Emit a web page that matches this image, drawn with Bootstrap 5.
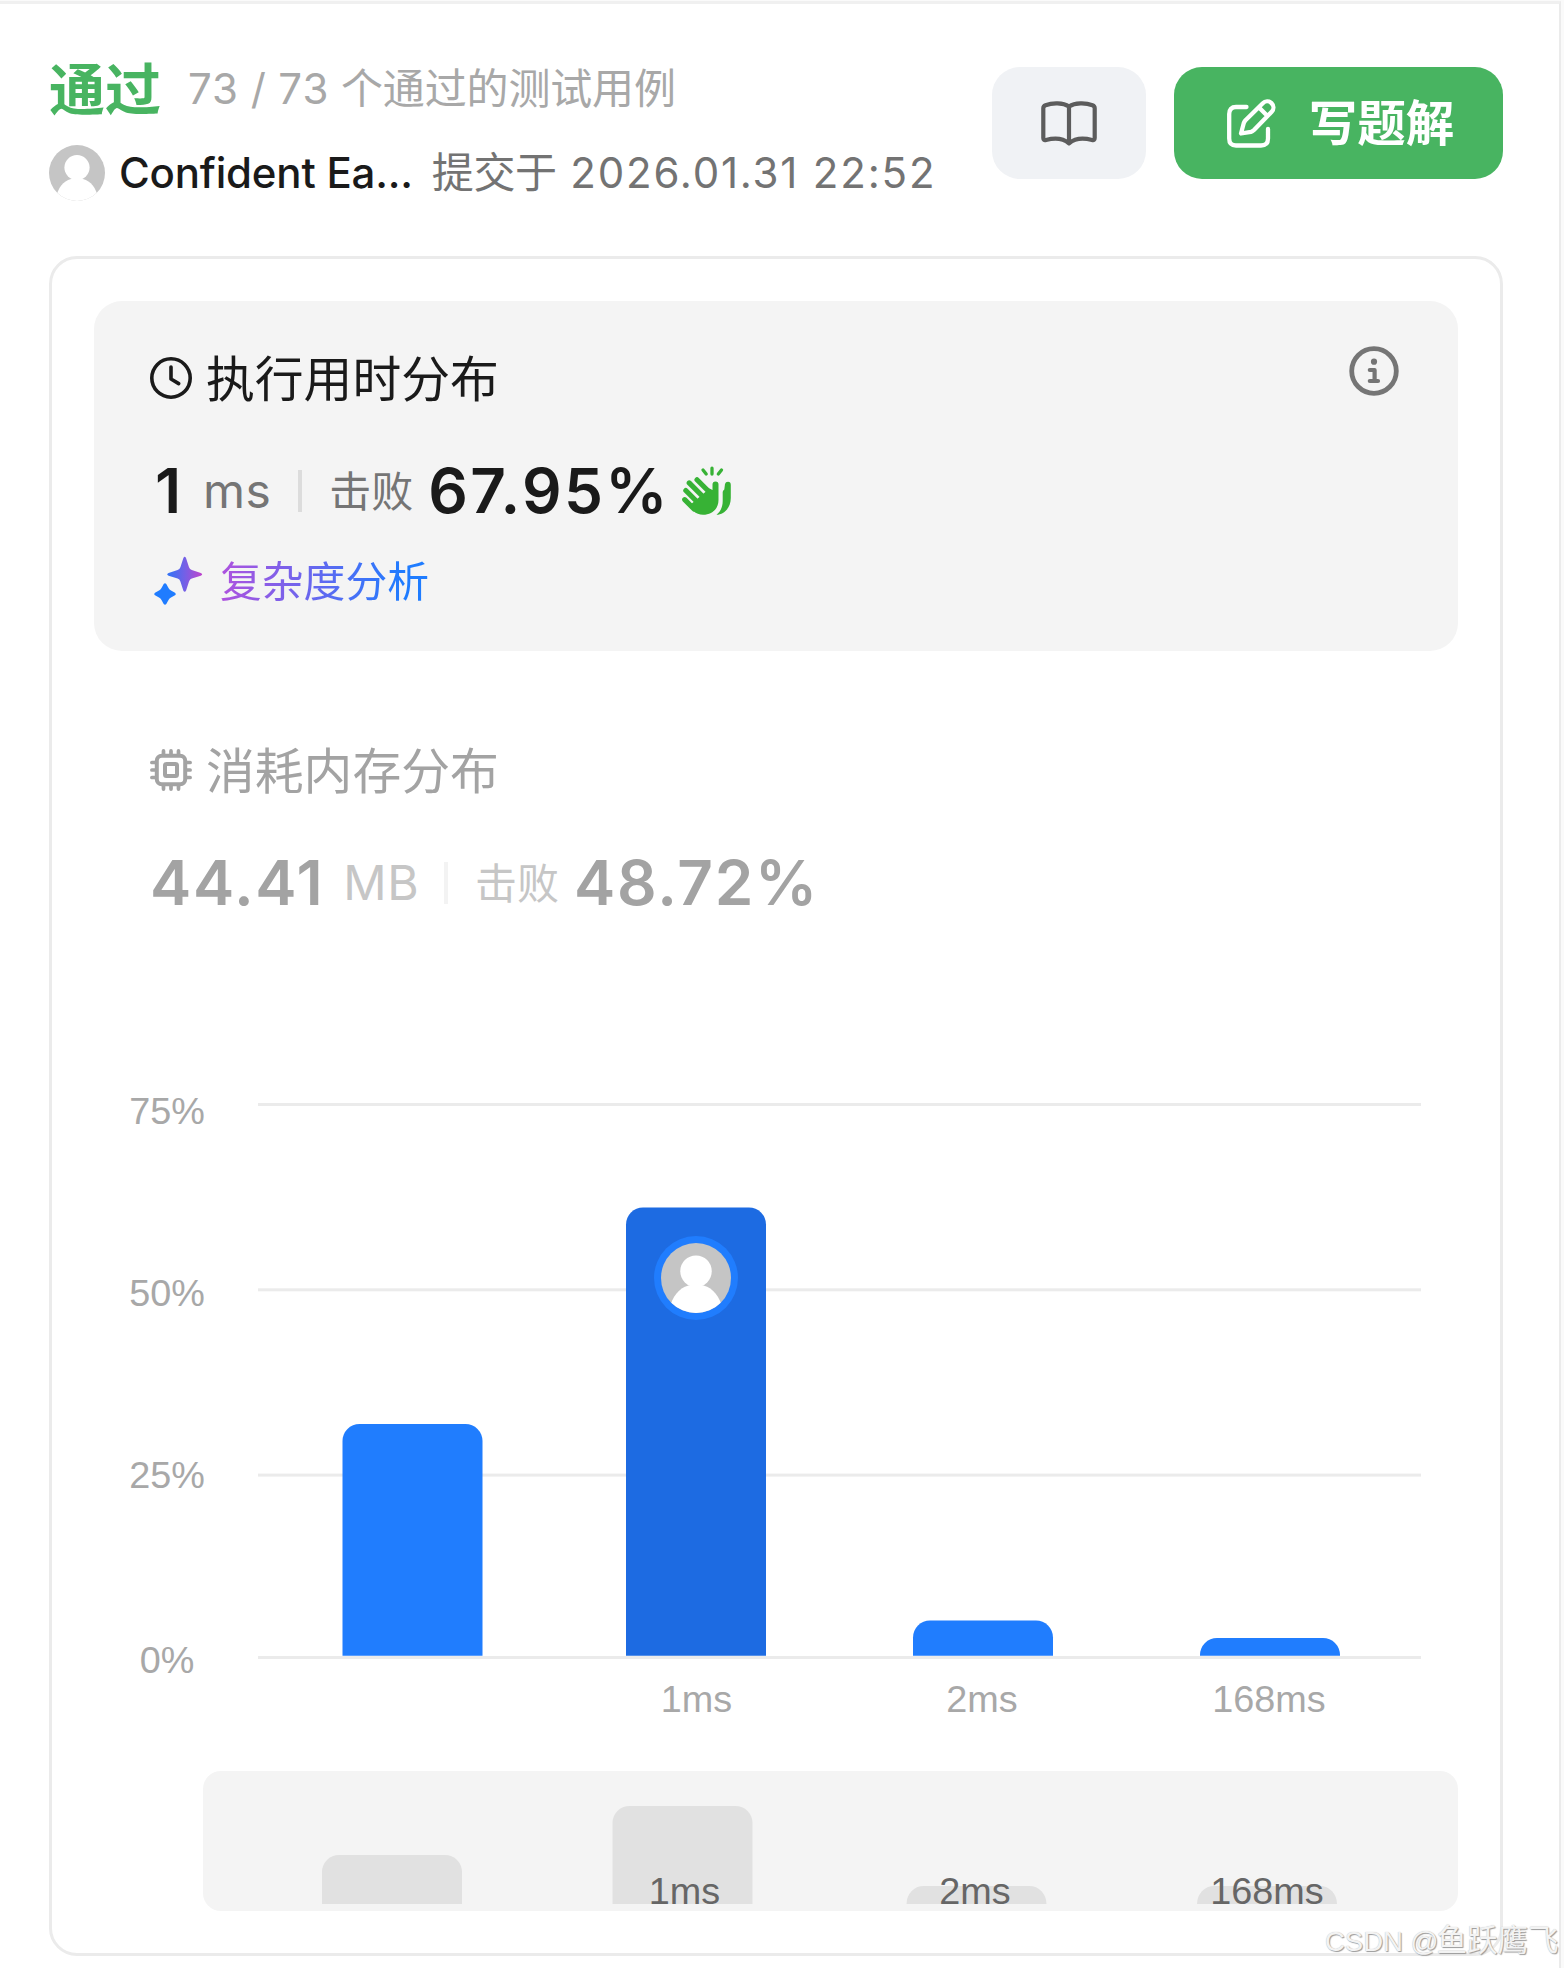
<!DOCTYPE html>
<html lang="zh-CN">
<head>
<meta charset="utf-8">
<title>提交结果</title>
<link href="https://cdn.jsdelivr.net/npm/bootstrap@5.3.0/dist/css/bootstrap.min.css" rel="stylesheet">
<style>
body{background:#fafafa;font-family:Inter,"Noto Sans CJK SC",sans-serif;color:#1a1a1a;padding-top:1px;height:1968px;overflow:hidden}
.pane{width:1561px;height:1967px;background:#fff;border-top:3px solid #f0f0f0;border-right:2px solid #ebebeb;padding:43px 56px 0 49px}
svg{display:block;flex:none}
.line84{height:84px;line-height:84px;font-size:42px;white-space:nowrap}
.verdict{font-size:56px;font-weight:700;color:#48b461;margin:1px 27px 0 0}
.cases{color:#a8a8a8;letter-spacing:1px;word-spacing:-1.2px}
.cases .cjk{letter-spacing:-.15px}
.user{font-weight:500;margin-left:14px;letter-spacing:-.2px}
.when{color:#737373;margin-left:19px;letter-spacing:1.8px}
.when .cjk{letter-spacing:-.4px}
.actions{gap:28px;margin-top:20px}
.act{height:112px;border-radius:28px;border:0}
.act-book{width:154px;background:#f0f2f5}
.act-write{width:329px;background:#48b461;color:#fff;font-size:48.5px;font-weight:700;line-height:1}
.act-write:hover{background:#48b461;color:#fff}
.act-write .label{margin:3px 0 0 33px}
.result{border:3px solid #ebebeb;border-radius:28px;padding:42px;margin-top:41px;height:1700px;background:#fff}
.metric{height:350px;border-radius:28px;padding:47px 56px 0}
.metric-on{background:#f4f4f4}
.metric-off{margin-top:42px}
.metric-title{height:60px;line-height:60px;font-size:48.8px;font-weight:400}
.metric-title .label{margin:3px 0 0 14px}
.metric-value{height:70px;line-height:70px;margin-top:48px;white-space:nowrap}
.num{font-size:62px;font-weight:600;letter-spacing:1.7px}
.unit{font-size:48px;color:#757575;letter-spacing:.5px}
.beat{font-size:42px;color:#757575;margin:2px 0 0 27px}
.bar-sep{width:4px;height:42px;background:#dcdcdc}
.metric-off{color:#a3a3a3}
.metric-off .unit,.metric-off .beat{color:#c6c6c6}
.metric-off .bar-sep{background:#f3f3f3}
.analysis{height:50px;line-height:50px;margin-top:30px;font-size:41.8px}
.analysis .label{margin:1px 0 0 17px;background:linear-gradient(90deg,#af52de,#1f7cff 88%);-webkit-background-clip:text;background-clip:text;color:transparent}
.axis{font-family:"Liberation Sans",sans-serif;font-size:37.8px}
.navi{width:1255px;height:140px;border-radius:18px;background:#f4f4f4;overflow:hidden}
.stamp{position:absolute;left:1325px;top:1920px;font:27.500px/40px "Liberation Sans","Noto Sans CJK SC",sans-serif;color:#f3f3f3;text-shadow:1px 1px 1px #999,0 0 1px #bbb;white-space:nowrap}
.stamp .cjk{font-size:30.5px;margin-left:-2px}
</style>
</head>
<body class="position-relative">
<svg width="0" height="0" class="position-absolute">
  <defs>
    <clipPath id="round"><circle cx="28" cy="28" r="28"/></clipPath>
    <symbol id="avatar" viewBox="0 0 56 56">
      <g clip-path="url(#round)"><rect width="56" height="56" fill="#c5c5c5"/><circle cx="28" cy="22.6" r="12.6" fill="#fff"/><path d="M22 34H34C42 36 47 43.500 49 52V57H7V52C9 43.500 14 36 22 34Z" fill="#fff"/></g>
    </symbol>
    <linearGradient id="spark" x1="0" y1="0" x2="1" y2="0"><stop offset="0" stop-color="#2f73f6"/><stop offset=".5" stop-color="#7460e6"/><stop offset="1" stop-color="#c044cc"/></linearGradient>
  </defs>
</svg>
<main class="pane">
  <header class="d-flex justify-content-between align-items-start">
    <div>
      <div class="line84 d-flex"><span class="verdict">通过</span><span class="cases">73 / 73 <span class="cjk">个通过的测试用例</span></span></div>
      <div class="line84 d-flex align-items-center"><svg width="56" height="56"><use href="#avatar"/></svg><span class="user">Confident Ea...</span><span class="when"><span class="cjk">提交于</span> 2026.01.31 22:52</span></div>
    </div>
    <div class="actions d-flex">
      <button class="btn act act-book p-0 d-flex align-items-center justify-content-center" aria-label="book">
        <svg width="56" height="45" viewBox="0 0 56 45" fill="none" stroke="#5c5c5c" stroke-width="4.200" stroke-linejoin="round" stroke-linecap="round"><path d="M28 5.500C22 1.600 11.500 1.600 4.500 4.200Q2.300 5 2.300 7.200V37Q2.300 39.800 5 39C13 36.800 22 37.200 28 42.300C34 37.200 43 36.800 51 39Q53.700 39.800 53.700 37V7.200Q53.700 5 51.500 4.200C44.500 1.600 34 1.600 28 5.500V42"/></svg>
      </button>
      <button class="btn act act-write p-0 ps-1 d-flex align-items-center justify-content-center">
        <svg width="49" height="49" viewBox="0 0 49 49" fill="none" stroke="#fff" stroke-width="4.300" stroke-linejoin="round" stroke-linecap="round"><path d="M19.500 8H9Q2.200 8 2.200 15V39.500Q2.200 46.500 9 46.500H34Q41 46.500 41 39.500V30M14 34.500L16.800 24Q17.300 22.500 18.500 21.200L35.800 4.300A6 6 0 0 1 44.700 12.800L27 31Q25.500 32.400 24 32.800ZM32 8.500L40.500 17"/></svg>
        <span class="label">写题解</span>
      </button>
    </div>
  </header>

  <section class="result">
    <div class="metric metric-on">
      <div class="metric-title d-flex align-items-center">
        <svg width="42" height="42" viewBox="0 0 42 42" fill="none" stroke="#1a1a1a" stroke-width="3.600" stroke-linecap="round" stroke-linejoin="round"><circle cx="21" cy="21" r="19.200"/><path d="M21 10V22L28.700 26.600"/></svg>
        <span class="label">执行用时分布</span>
        <svg class="ms-auto align-self-start" style="margin:-2px 3px 0 0" width="50" height="50" viewBox="0 0 50 50" fill="none" stroke="#757575" stroke-linecap="round" stroke-linejoin="round"><circle cx="25" cy="25" r="22.300" stroke-width="4.800"/><circle cx="25" cy="15.700" r="3.100" fill="#757575" stroke="none"/><path d="M20.800 24H25.600V35M20.800 35H29" stroke-width="4.200"/></svg>
      </div>
      <div class="metric-value d-flex align-items-center">
        <span class="num" style="margin-left:5px">1</span><span class="unit" style="margin-left:20px">ms</span>
        <span class="bar-sep" style="margin-left:27px"></span><span class="beat">击败</span>
        <span class="num" style="margin-left:15px;letter-spacing:2.300px">67.95%</span>
        <svg style="margin-left:12px" width="50" height="50" viewBox="0 0 50 50" fill="none" stroke="#37b235" stroke-linecap="round"><path d="M2.700 33.600L12 43M3.800 24.500L16 36.700M7.200 16.900L22 31.700M15 13.700L28 26.700" stroke-width="5.100"/><path d="M8 39L27.500 22.500L30.500 24V18.500A3 3 0 0 1 36.500 18.500V34C36.500 43 30 48.800 21 48.800Q15.500 48.800 11.500 45Z" fill="#37b235" stroke="none"/><path d="M43 18Q43.500 15.800 46 15.800Q48.800 15.800 48.800 19V32C48.800 42 42 48.600 34.500 48.800C38.500 45.500 40.700 41 40.700 35V26Q40.700 24.500 42.300 23.500Z" fill="#37b235" stroke="none"/><path d="M21 4L24.200 8M30 2.200V8M39.500 4L36.300 8" stroke-width="3.300"/></svg>
      </div>
      <div class="analysis d-flex">
        <svg style="margin-left:4px" width="49" height="50" viewBox="0 0 49 50"><path d="M29.300 2.200Q30.700-.6 32.100 2.200L35 11.200Q35.700 13.300 37.800 14L46.800 16.900Q49.600 18.300 46.800 19.700L37.800 22.600Q35.700 23.300 35 25.400L32.100 34.400Q30.700 37.200 29.300 34.400L26.400 25.400Q25.700 23.300 23.600 22.600L14.600 19.700Q11.800 18.300 14.600 16.900L23.600 14Q25.700 13.300 26.400 11.200Z" fill="url(#spark)"/><path d="M9.700 28Q11 26.500 12.300 28L14.500 32Q15.400 33.600 17 34.500L21 36.700Q22.500 38 21 39.300L17 41.500Q15.400 42.400 14.500 44L12.300 48Q11 49.500 9.700 48L7.500 44Q6.600 42.400 5 41.500L1 39.300Q-.5 38 1 36.700L5 34.500Q6.600 33.600 7.500 32Z" fill="#1f7cff"/></svg>
        <span class="label">复杂度分析</span>
      </div>
    </div>

    <div class="metric metric-off">
      <div class="metric-title d-flex align-items-center">
        <svg width="42" height="42" viewBox="0 0 42 42" fill="none" stroke="#a3a3a3" stroke-linecap="round"><rect x="6.800" y="6.800" width="28.400" height="28.400" rx="5" stroke-width="4"/><rect x="15" y="15" width="12" height="12" rx="1.500" stroke-width="4"/><path d="M13.500 1.900V5M21 1.900V5M28.500 1.900V5M13.500 37V40.100M21 37V40.100M28.500 37V40.100M1.900 13.500H5M1.900 21H5M1.900 28.500H5M37 13.500H40.100M37 21H40.100M37 28.500H40.100" stroke-width="3.700"/></svg>
        <span class="label">消耗内存分布</span>
      </div>
      <div class="metric-value d-flex align-items-center">
        <span class="num">44.41</span><span class="unit" style="margin-left:19px">MB</span>
        <span class="bar-sep" style="margin-left:25px"></span><span class="beat">击败</span>
        <span class="num" style="margin-left:15px">48.72%</span>
      </div>
    </div>

    <svg class="axis" width="1364" height="728" viewBox="94 1043 1364 728" fill="#a8a8a8" text-anchor="middle">
      <g fill="#ebebeb"><rect x="258" y="1103" width="1163" height="3"/><rect x="258" y="1288.300" width="1163" height="3"/><rect x="258" y="1473.600" width="1163" height="3"/><rect x="258" y="1656" width="1163" height="3"/></g>
      <g fill="#207dfe">
        <path d="M342.500 1655.700V1441a17 17 0 0 1 17-17h106a17 17 0 0 1 17 17V1655.700Z"/>
        <path d="M626 1655.700V1224.500a17 17 0 0 1 17-17h106a17 17 0 0 1 17 17V1655.700Z" fill="#1d6be2"/>
        <path d="M913 1655.700V1637.500a17 17 0 0 1 17-17h106a17 17 0 0 1 17 17V1655.700Z"/>
        <path d="M1200 1655.700V1655a17 17 0 0 1 17-17h106a17 17 0 0 1 17 17V1655.700Z"/>
        <circle cx="696" cy="1278" r="42"/>
      </g>
      <use href="#avatar" x="661" y="1243" width="70" height="70"/>
      <text x="167" y="1124">75%</text><text x="167" y="1306">50%</text><text x="167" y="1488">25%</text><text x="167" y="1673">0%</text>
      <text x="696.500" y="1712">1ms</text><text x="982" y="1712">2ms</text><text x="1269" y="1712">168ms</text>
    </svg>

    <div class="navi ms-auto">
      <svg class="axis" width="1255" height="140" viewBox="203 1771 1255 140" fill="#666" text-anchor="middle">
        <g fill="#e1e1e1">
          <path d="M322 1904V1872a17 17 0 0 1 17-17h106a17 17 0 0 1 17 17V1904Z"/>
          <path d="M612.500 1904V1823a17 17 0 0 1 17-17h106a17 17 0 0 1 17 17V1904Z"/>
          <path d="M906.500 1904a17 18 0 0 1 17-18h106a17 18 0 0 1 17 18Z"/>
          <path d="M1197 1904a17 18 0 0 1 17-18h106a17 18 0 0 1 17 18Z"/>
        </g>
        <text x="684.500" y="1904">1ms</text><text x="975" y="1904">2ms</text><text x="1267" y="1904">168ms</text>
      </svg>
    </div>
  </section>
</main>
<div class="stamp">CSDN @<span class="cjk">鱼跃鹰飞</span></div>
<script src="https://cdn.jsdelivr.net/npm/bootstrap@5.3.0/dist/js/bootstrap.bundle.min.js"></script>
</body>
</html>
